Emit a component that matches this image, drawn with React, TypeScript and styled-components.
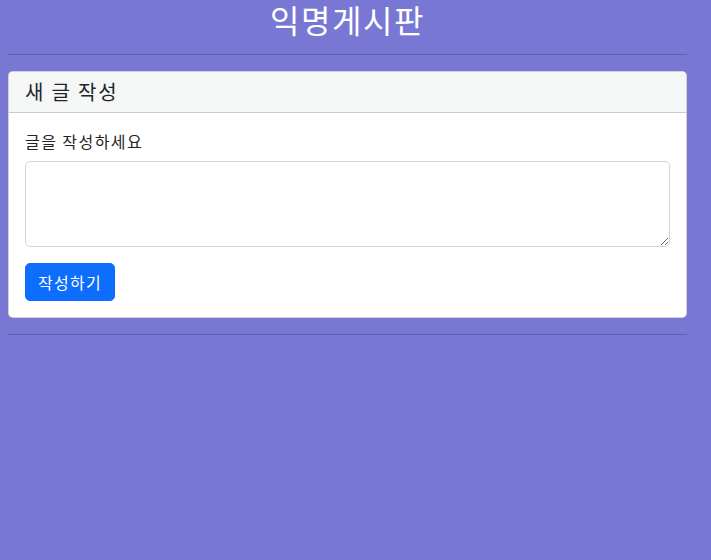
import styled, { createGlobalStyle } from "styled-components";

const GlobalStyle = createGlobalStyle`
  *, *::before, *::after {
    box-sizing: border-box;
  }

  body {
    margin: 0;
    background-color: #7878d4;
    font-family: "Noto Sans CJK KR", "Noto Sans", sans-serif;
    color: #212529;
    font-size: 16px;
    line-height: 1.5;
  }
`;

const Page = styled.div`
  width: 100vw;
  min-height: 100vh;
  padding: 0 24px 0 8px;
`;

const Title = styled.h1`
  margin: 0;
  font-size: 32px;
  line-height: 38px;
  font-weight: 400;
  letter-spacing: 0.05em;
  color: #fff;
  text-align: center;
`;

const Divider = styled.hr`
  margin: 16px 0;
  border: 0;
  border-top: 1px solid #5e5ea6;
  opacity: 0.9;
`;

const Card = styled.section`
  background-color: #fff;
  border: 1px solid rgba(0, 0, 0, 0.175);
  border-radius: 5px;
  overflow: hidden;
`;

const CardHeader = styled.div`
  padding: 8px 16px;
  background-color: #f5f7f7;
  border-bottom: 1px solid rgba(0, 0, 0, 0.175);
  font-size: 20px;
  line-height: 24px;
  letter-spacing: 0.09em;
  color: #212529;
`;

const CardBody = styled.form`
  padding: 16px;
  display: flex;
  flex-direction: column;
  align-items: flex-start;
`;

const Label = styled.label`
  margin-bottom: 8px;
  font-size: 16px;
  line-height: 24px;
  letter-spacing: 0.09em;
`;

const TextArea = styled.textarea`
  width: 100%;
  height: 86px;
  padding: 6px 12px;
  border: 1px solid #ced4da;
  border-radius: 5px;
  font-family: inherit;
  font-size: 16px;
  line-height: 24px;
  resize: vertical;
  margin-bottom: 16px;
`;

const SubmitButton = styled.button`
  height: 38px;
  padding: 6px 12px;
  border: 1px solid #0d6efd;
  border-radius: 5px;
  background-color: #0d6efd;
  color: #fff;
  font-family: inherit;
  font-size: 16px;
  line-height: 24px;
  letter-spacing: 0.08em;
  cursor: pointer;
`;

function App() {
  return (
    <Page>
      <GlobalStyle />
      <Title>익명게시판</Title>
      <Divider />
      <Card>
        <CardHeader>새 글 작성</CardHeader>
        <CardBody onSubmit={(e) => e.preventDefault()}>
          <Label htmlFor="content">글을 작성하세요</Label>
          <TextArea id="content" rows={3} />
          <SubmitButton type="submit">작성하기</SubmitButton>
        </CardBody>
      </Card>
      <Divider />
    </Page>
  );
}

export default App;
